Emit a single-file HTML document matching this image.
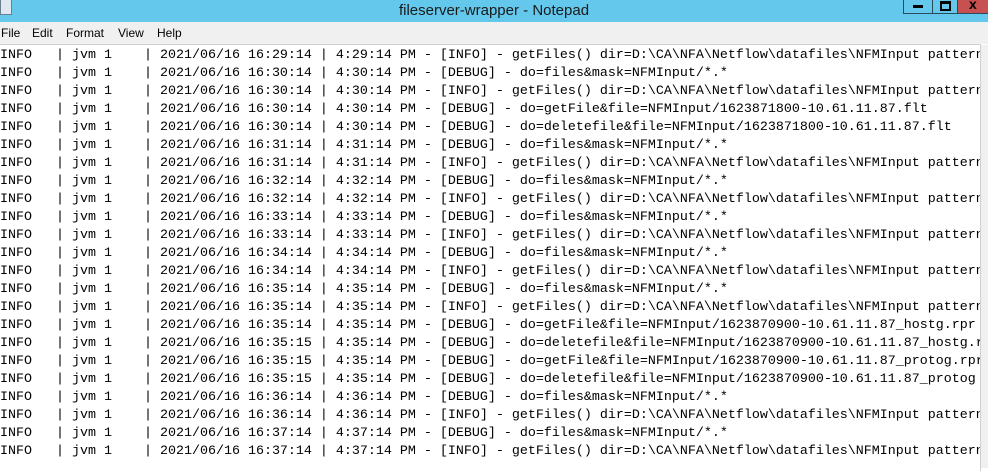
<!DOCTYPE html>
<html><head><meta charset="utf-8"><style>
body{margin:0;width:988px;height:468px;overflow:hidden;background:#fff;position:relative;font-family:"Liberation Sans",sans-serif}
#title{position:absolute;left:0;top:0;width:988px;height:22px;background:#63c8eb}
#title .t{position:absolute;left:0;width:988px;top:2px;text-align:center;font-size:15px;color:#1a1a1a}
#icon{position:absolute;left:0;top:0;width:10px;height:14px;background:#dfe8f0;border:1px solid #6a7f90;border-top:none}
.btn{position:absolute;top:0;height:13px;border:1px solid #2b4a5a;border-top:none;background:#63c8eb}
#menu{position:absolute;left:0;top:22px;width:988px;height:22px;background:#f0f0f0;font-size:12px;color:#000}
#menu span{position:absolute;top:4px}
#text{position:absolute;left:0;top:44px;width:980px;height:424px;overflow:hidden;border-top:1px solid #d0d0d0;border-right:1px solid #d0d0d0;font-family:"Liberation Mono",monospace;font-size:13.33px;line-height:18px;white-space:pre;color:#000;padding-top:2px}
#sb{position:absolute;left:981px;top:45px;width:7px;height:423px;background:#f0f0f0}
</style></head><body>
<div id="title"><div id="icon"></div><div class="t">fileserver-wrapper - Notepad</div>
<div class="btn" style="left:903px;width:28px"><div style="position:absolute;left:9px;top:5px;width:10px;height:3px;background:#000"></div></div>
<div class="btn" style="left:932px;width:24px"><div style="position:absolute;left:7px;top:1px;width:7px;height:5px;border:2px solid #000;border-top-width:3px"></div></div>
<div class="btn" style="left:957px;width:31px;background:#c75050"><div style="position:absolute;left:11px;top:-4px;font-size:14px;font-weight:bold;color:#000">x</div></div>
</div>
<div id="menu"><span style="left:1px">File</span><span style="left:32px">Edit</span><span style="left:66px">Format</span><span style="left:118px">View</span><span style="left:157px">Help</span></div>
<div id="text">INFO   | jvm 1    | 2021/06/16 16:29:14 | 4:29:14 PM - [INFO] - getFiles() dir=D:\CA\NFA\Netflow\datafiles\NFMInput pattern
INFO   | jvm 1    | 2021/06/16 16:30:14 | 4:30:14 PM - [DEBUG] - do=files&amp;mask=NFMInput/*.*
INFO   | jvm 1    | 2021/06/16 16:30:14 | 4:30:14 PM - [INFO] - getFiles() dir=D:\CA\NFA\Netflow\datafiles\NFMInput pattern
INFO   | jvm 1    | 2021/06/16 16:30:14 | 4:30:14 PM - [DEBUG] - do=getFile&amp;file=NFMInput/1623871800-10.61.11.87.flt
INFO   | jvm 1    | 2021/06/16 16:30:14 | 4:30:14 PM - [DEBUG] - do=deletefile&amp;file=NFMInput/1623871800-10.61.11.87.flt
INFO   | jvm 1    | 2021/06/16 16:31:14 | 4:31:14 PM - [DEBUG] - do=files&amp;mask=NFMInput/*.*
INFO   | jvm 1    | 2021/06/16 16:31:14 | 4:31:14 PM - [INFO] - getFiles() dir=D:\CA\NFA\Netflow\datafiles\NFMInput pattern
INFO   | jvm 1    | 2021/06/16 16:32:14 | 4:32:14 PM - [DEBUG] - do=files&amp;mask=NFMInput/*.*
INFO   | jvm 1    | 2021/06/16 16:32:14 | 4:32:14 PM - [INFO] - getFiles() dir=D:\CA\NFA\Netflow\datafiles\NFMInput pattern
INFO   | jvm 1    | 2021/06/16 16:33:14 | 4:33:14 PM - [DEBUG] - do=files&amp;mask=NFMInput/*.*
INFO   | jvm 1    | 2021/06/16 16:33:14 | 4:33:14 PM - [INFO] - getFiles() dir=D:\CA\NFA\Netflow\datafiles\NFMInput pattern
INFO   | jvm 1    | 2021/06/16 16:34:14 | 4:34:14 PM - [DEBUG] - do=files&amp;mask=NFMInput/*.*
INFO   | jvm 1    | 2021/06/16 16:34:14 | 4:34:14 PM - [INFO] - getFiles() dir=D:\CA\NFA\Netflow\datafiles\NFMInput pattern
INFO   | jvm 1    | 2021/06/16 16:35:14 | 4:35:14 PM - [DEBUG] - do=files&amp;mask=NFMInput/*.*
INFO   | jvm 1    | 2021/06/16 16:35:14 | 4:35:14 PM - [INFO] - getFiles() dir=D:\CA\NFA\Netflow\datafiles\NFMInput pattern
INFO   | jvm 1    | 2021/06/16 16:35:14 | 4:35:14 PM - [DEBUG] - do=getFile&amp;file=NFMInput/1623870900-10.61.11.87_hostg.rpr
INFO   | jvm 1    | 2021/06/16 16:35:15 | 4:35:14 PM - [DEBUG] - do=deletefile&amp;file=NFMInput/1623870900-10.61.11.87_hostg.rpr
INFO   | jvm 1    | 2021/06/16 16:35:15 | 4:35:14 PM - [DEBUG] - do=getFile&amp;file=NFMInput/1623870900-10.61.11.87_protog.rpr
INFO   | jvm 1    | 2021/06/16 16:35:15 | 4:35:14 PM - [DEBUG] - do=deletefile&amp;file=NFMInput/1623870900-10.61.11.87_protog
INFO   | jvm 1    | 2021/06/16 16:36:14 | 4:36:14 PM - [DEBUG] - do=files&amp;mask=NFMInput/*.*
INFO   | jvm 1    | 2021/06/16 16:36:14 | 4:36:14 PM - [INFO] - getFiles() dir=D:\CA\NFA\Netflow\datafiles\NFMInput pattern
INFO   | jvm 1    | 2021/06/16 16:37:14 | 4:37:14 PM - [DEBUG] - do=files&amp;mask=NFMInput/*.*
INFO   | jvm 1    | 2021/06/16 16:37:14 | 4:37:14 PM - [INFO] - getFiles() dir=D:\CA\NFA\Netflow\datafiles\NFMInput pattern</div>
<div id="sb"></div>
</body></html>
